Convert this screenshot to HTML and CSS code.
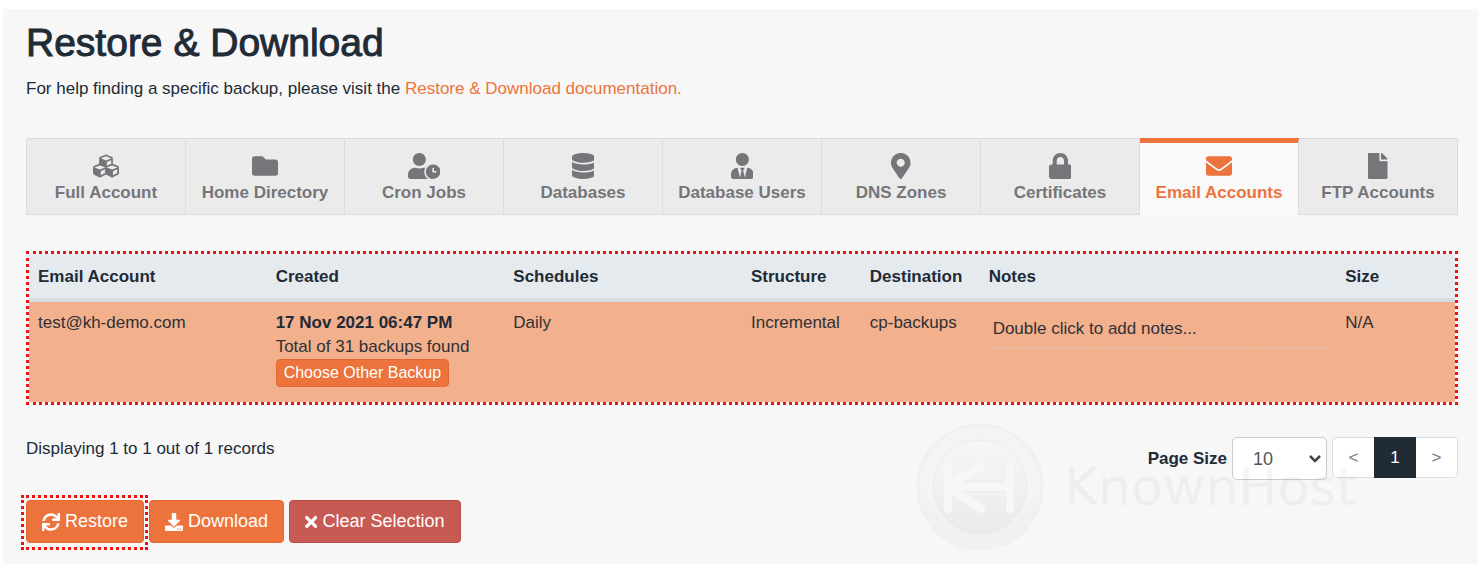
FILE: index.html
```html
<!DOCTYPE html>
<html lang="en">
<head>
  <meta charset="UTF-8">
  <meta name="viewport" content="width=device-width, initial-scale=1">
  <title>Restore &amp; Download</title>
  <link rel="stylesheet" href="styles.css">
</head>
<body>
  <main class="panel">
    <h1>Restore &amp; Download</h1>
    <p class="intro">For help finding a specific backup, please visit the <a href="#">Restore &amp; Download documentation.</a></p>

    <!-- Backup types -->
    <nav class="tabs">
      <a class="tab" href="#">
        <svg class="icon" viewBox="0 0 512 512"><path d="M488.6 250.2L392 214V105.5c0-15-9.3-28.4-23.4-33.7l-100-37.5c-8.1-3.1-17.1-3.1-25.3 0l-100 37.5c-14.1 5.3-23.4 18.7-23.4 33.7V214l-96.6 36.2C9.3 255.5 0 268.9 0 283.9V394c0 13.6 7.7 26.1 19.9 32.2l100 50c10.1 5.1 22.1 5.1 32.2 0l103.9-52 103.9 52c10.1 5.1 22.1 5.1 32.2 0l100-50c12.2-6.1 19.9-18.6 19.9-32.2V283.9c0-15-9.3-28.4-23.4-33.7zM358 214.8l-85 31.9v-68.2l85-37v73.3zM154 104.1l102-38.2 102 38.2v.6l-102 41.4-102-41.4v-.6zm84 291.1l-85 42.5v-79.1l85-38.8v75.4zm0-112l-102 41.4-102-41.4v-.6l102-38.2 102 38.2v.6zm240 112l-85 42.5v-79.1l85-38.8v75.4zm0-112l-102 41.4-102-41.4v-.6l102-38.2 102 38.2v.6z"/></svg>
        <span>Full Account</span>
      </a>
      <a class="tab" href="#">
        <svg class="icon" viewBox="0 0 512 512"><path d="M464 128H272l-64-64H48C21.49 64 0 85.49 0 112v288c0 26.51 21.49 48 48 48h416c26.51 0 48-21.49 48-48V176c0-26.51-21.49-48-48-48z"/></svg>
        <span>Home Directory</span>
      </a>
      <a class="tab" href="#">
        <svg class="icon" viewBox="0 0 640 512"><path d="M496 224c-79.6 0-144 64.4-144 144s64.4 144 144 144 144-64.4 144-144-64.4-144-144-144zm64 150.3c0 5.3-4.4 9.7-9.7 9.7h-60.6c-5.3 0-9.7-4.4-9.7-9.7v-76.6c0-5.3 4.4-9.7 9.7-9.7h12.6c5.3 0 9.7 4.4 9.7 9.7V352h38.3c5.3 0 9.7 4.4 9.7 9.7v12.6zM320 368c0-27.8 6.7-54.1 18.2-77.5-8-1.5-16.2-2.5-24.6-2.5h-16.7c-22.2 10.2-46.9 16-72.9 16s-50.6-5.8-72.9-16h-16.7C60.2 288 0 348.2 0 422.4V464c0 26.5 21.5 48 48 48h347.1c-45.3-31.9-75.1-84.5-75.1-144zm-96-112c70.7 0 128-57.3 128-128S294.7 0 224 0 96 57.3 96 128s57.3 128 128 128z"/></svg>
        <span>Cron Jobs</span>
      </a>
      <a class="tab" href="#">
        <svg class="icon" viewBox="0 0 448 512"><path d="M448 73.143v45.714C448 159.143 347.667 192 224 192S0 159.143 0 118.857V73.143C0 32.857 100.333 0 224 0s224 32.857 224 73.143zM448 176v102.857C448 319.143 347.667 352 224 352S0 319.143 0 278.857V176c48.125 33.143 136.208 48.572 224 48.572S399.874 209.143 448 176zm0 160v102.857C448 479.143 347.667 512 224 512S0 479.143 0 438.857V336c48.125 33.143 136.208 48.572 224 48.572S399.874 369.143 448 336z"/></svg>
        <span>Databases</span>
      </a>
      <a class="tab" href="#">
        <svg class="icon" viewBox="0 0 448 512"><path d="M224 256c70.7 0 128-57.3 128-128S294.7 0 224 0 96 57.3 96 128s57.3 128 128 128zm95.8 32.6L272 480l-32-136 32-56h-96l32 56-32 136-47.8-191.4C56.9 292 0 350.3 0 422.4V464c0 26.5 21.5 48 48 48h352c26.5 0 48-21.5 48-48v-41.6c0-72.1-56.9-130.4-128.2-133.8z"/></svg>
        <span>Database Users</span>
      </a>
      <a class="tab" href="#">
        <svg class="icon" viewBox="0 0 384 512"><path d="M172.268 501.67C26.97 291.031 0 269.413 0 192 0 85.961 85.961 0 192 0s192 85.961 192 192c0 77.413-26.97 99.031-172.268 309.67-9.535 13.774-29.93 13.773-39.464 0zM192 272c44.183 0 80-35.817 80-80s-35.817-80-80-80-80 35.817-80 80 35.817 80 80 80z"/></svg>
        <span>DNS Zones</span>
      </a>
      <a class="tab" href="#">
        <svg class="icon" viewBox="0 0 448 512"><path d="M400 224h-24v-72C376 68.2 307.8 0 224 0S72 68.2 72 152v72H48c-26.5 0-48 21.5-48 48v192c0 26.5 21.5 48 48 48h352c26.5 0 48-21.5 48-48V272c0-26.5-21.5-48-48-48zm-104 0H152v-72c0-39.7 32.3-72 72-72s72 32.3 72 72v72z"/></svg>
        <span>Certificates</span>
      </a>
      <a class="tab active" href="#">
        <svg class="icon" viewBox="0 0 512 512"><path d="M502.3 190.8c3.9-3.1 9.7-.2 9.7 4.7V400c0 26.5-21.5 48-48 48H48c-26.5 0-48-21.5-48-48V195.6c0-5 5.7-7.8 9.7-4.7 22.4 17.4 52.1 39.5 154.1 113.6 21.1 15.4 56.7 47.8 92.2 47.6 35.7.3 72-32.8 92.3-47.6 102-74.1 131.6-96.3 154-113.7zM256 320c23.2.4 56.6-29.2 73.4-41.4 132.7-96.3 142.8-104.7 173.4-128.7 5.8-4.5 9.2-11.5 9.2-18.9v-19c0-26.5-21.5-48-48-48H48c-26.5 0-48 21.5-48 48v19c0 7.4 3.4 14.3 9.2 18.9 30.6 23.9 40.7 32.4 173.4 128.7 16.8 12.2 50.2 41.8 73.4 41.4z"/></svg>
        <span>Email Accounts</span>
      </a>
      <a class="tab" href="#">
        <svg class="icon" viewBox="0 0 384 512"><path d="M224 136V0H24C10.7 0 0 10.7 0 24v464c0 13.3 10.7 24 24 24h336c13.3 0 24-10.7 24-24V160H248c-13.2 0-24-10.8-24-24zm160-14.1v6.1H256V0h6.1c6.4 0 12.5 2.5 17 7l97.9 98c4.5 4.5 7 10.6 7 16.9z"/></svg>
        <span>FTP Accounts</span>
      </a>
    </nav>

    <!-- Backups -->
    <div class="backups">
      <table>
        <thead>
          <tr>
            <th class="col-2">Email Account</th>
            <th class="col-2">Created</th>
            <th class="col-2">Schedules</th>
            <th class="col-1">Structure</th>
            <th class="col-1">Destination</th>
            <th class="col-3">Notes</th>
            <th class="col-1">Size</th>
          </tr>
        </thead>
        <tbody>
          <tr>
            <td>test@kh-demo.com</td>
            <td>
              <strong>17 Nov 2021 06:47 PM</strong>
              <div>Total of 31 backups found</div>
              <button type="button" class="btn btn-small">Choose Other Backup</button>
            </td>
            <td>Daily</td>
            <td>Incremental</td>
            <td>cp-backups</td>
            <td><div class="note">Double click to add notes...</div></td>
            <td>N/A</td>
          </tr>
        </tbody>
      </table>
    </div>

    <div class="table-footer">
      <div class="records">Displaying 1 to 1 out of 1 records</div>
      <div class="paging">
        <label for="pageSize">Page Size</label>
        <select id="pageSize">
          <option>10</option>
          <option>25</option>
          <option>50</option>
        </select>
        <div class="pager">
          <button type="button">&lt;</button>
          <button type="button" class="current">1</button>
          <button type="button">&gt;</button>
        </div>
      </div>
    </div>

    <div class="actions">
      <button type="button" class="btn highlighted">
        <svg class="icon" viewBox="0 0 512 512"><path d="M440.65 12.57l4 82.77A247.16 247.16 0 0 0 255.83 8C134.73 8 33.91 94.92 12.29 209.82A12 12 0 0 0 24.09 224h49.05a12 12 0 0 0 11.67-9.26 175.91 175.91 0 0 1 317-56.94l-101.46-4.86a12 12 0 0 0-12.57 12v47.41a12 12 0 0 0 12 12H500a12 12 0 0 0 12-12V12a12 12 0 0 0-12-12h-47.37a12 12 0 0 0-11.98 12.57zM255.83 432a175.61 175.61 0 0 1-146-77.8l101.8 4.87a12 12 0 0 0 12.57-12v-47.4a12 12 0 0 0-12-12H12a12 12 0 0 0-12 12V500a12 12 0 0 0 12 12h47.35a12 12 0 0 0 12-12.6l-4.15-82.57A247.17 247.17 0 0 0 255.83 504c121.11 0 221.93-86.92 243.55-201.82a12 12 0 0 0-11.8-14.18h-49.05a12 12 0 0 0-11.67 9.26A175.86 175.86 0 0 1 255.83 432z"/></svg>
        Restore
      </button>
      <button type="button" class="btn">
        <svg class="icon" viewBox="0 0 512 512"><path d="M216 0h80c13.3 0 24 10.7 24 24v168h87.7c17.8 0 26.7 21.5 14.1 34.1L269.7 378.3c-7.5 7.5-19.8 7.5-27.3 0L90.1 226.1c-12.6-12.6-3.7-34.1 14.1-34.1H192V24c0-13.3 10.7-24 24-24zm296 376v112c0 13.3-10.7 24-24 24H24c-13.3 0-24-10.7-24-24V376c0-13.3 10.7-24 24-24h146.7l49 49c20.1 20.1 52.5 20.1 72.6 0l49-49H488c13.3 0 24 10.7 24 24zm-124 88c0-11-9-20-20-20s-20 9-20 20 9 20 20 20 20-9 20-20zm64 0c0-11-9-20-20-20s-20 9-20 20 9 20 20 20 20-9 20-20z"/></svg>
        Download
      </button>
      <button type="button" class="btn btn-danger">
        <svg class="icon" viewBox="0 0 352 512"><path d="M242.72 256l100.07-100.07c12.28-12.28 12.28-32.19 0-44.48l-22.24-22.24c-12.28-12.28-32.19-12.28-44.48 0L176 189.28 75.93 89.21c-12.28-12.28-32.19-12.28-44.48 0L9.21 111.45c-12.28 12.28-12.28 32.19 0 44.48L109.28 256 9.21 356.07c-12.28 12.28-12.28 32.19 0 44.48l22.24 22.24c12.28 12.28 32.2 12.28 44.48 0L176 322.72l100.07 100.07c12.28 12.28 32.2 12.28 44.48 0l22.24-22.24c12.28-12.28 12.28-32.19 0-44.48L242.72 256z"/></svg>
        Clear Selection
      </button>
    </div>

    <!-- Watermark -->
    <div class="watermark">
      <svg class="watermark-logo" viewBox="0 0 128 128">
        <defs>
          <linearGradient id="disc" x1="0" y1="0" x2="0" y2="1">
            <stop offset="0" stop-color="#f6f6f6"/>
            <stop offset="1" stop-color="#eaeaea"/>
          </linearGradient>
        </defs>
        <circle cx="64" cy="64" r="62" fill="#f4f4f4" stroke="#f0f0f0" stroke-width="3"/>
        <path d="M4 66Q10 80 16 80A50 50 0 0 0 46 108H82A50 50 0 0 0 112 80Q120 78 124 68A60 60 0 0 1 4 66z" fill="#f1f1f1"/>
        <circle cx="64" cy="64" r="47" fill="url(#disc)" stroke="#ebebeb"/>
        <path d="M32 43V86M65 43L37 60Q32 64 37 68L66 86M40 64H91M94 43V86" fill="none" stroke="#f7f7f7" stroke-width="8" stroke-linecap="round"/>
        <path d="M52 71H86V86" fill="none" stroke="#f5f5f5" stroke-width="1"/>
      </svg>
      <span>KnownHost</span>
    </div>
  </main>
</body>
</html>
```
FILE: styles.css
```css
body {
  margin: 0;
  padding: 9px 3px 10px;
  background: #fff;
  color: #212b36;
  font-family: "Liberation Sans", Arial, sans-serif;
  font-size: 17px;
  line-height: 24px;
}

.panel {
  position: relative;
  padding: 10px 20px 21px 23px;
  background: #f7f7f7;
}

h1 {
  margin: 0 0 10px;
  font-size: 39px;
  font-weight: 500;
  line-height: 48px;
  -webkit-text-stroke: 1px #212b36;
}

.intro {
  margin: 0 0 37px;
}

a {
  color: #ec743c;
  text-decoration: none;
}

.icon {
  height: 1em;
  fill: currentColor;
}

/* tabs */
.tabs {
  display: flex;
  border-left: 1px solid #dcdcdc;
}

.tab {
  flex: 1 1 0;
  display: flex;
  flex-direction: column;
  align-items: center;
  padding: 14px 0 7px;
  background: #ebebeb;
  border: 1px solid #dcdcdc;
  border-left: none;
  color: #75767a;
  font-weight: bold;
  line-height: 28px;
  white-space: nowrap;
}

.tab .icon {
  height: 26px;
}

.tab.active {
  padding-top: 10px;
  background: #f9f9f9;
  border-top: 5px solid #ec743c;
  border-bottom-color: #f9f9f9;
  color: #ec743c;
}

/* backups table */
.backups {
  margin-top: 36px;
  border: 3px dotted #f01010;
}

table {
  width: 100%;
  table-layout: fixed;
  border-collapse: collapse;
  background: #f2b08d;
}

th, td {
  box-sizing: border-box;
  padding: 9px;
  text-align: left;
  vertical-align: top;
}

th {
  padding-top: 11px;
  background: #e5eaef;
  border-bottom: 4px solid #d8dbe2;
}

td {
  padding-bottom: 15px;
  color: #2f3136;
}

td strong {
  color: #212b36;
}

.col-1 {
  width: 8.3333%;
}

.col-2 {
  width: 16.6667%;
}

.col-3 {
  width: 25%;
}

.note {
  padding: 6px 4px;
  border-bottom: 1px dashed #d5cbc5;
}

/* buttons */
.btn {
  display: flex;
  align-items: center;
  gap: 5px;
  height: 43px;
  padding: 0 15px;
  border: 1px solid #e2692f;
  border-radius: 4px;
  background: #ec743c;
  color: #fff;
  font-family: inherit;
  font-size: 18px;
  cursor: pointer;
}

.btn-small {
  height: 28px;
  padding: 0 7px;
  font-size: 16px;
}

.btn-danger {
  background: #c85a54;
  border-color: #bd4a44;
}

.highlighted {
  position: relative;
}

.highlighted::after {
  content: "";
  position: absolute;
  inset: -6px -5px -8px -6px;
  border: 3px dotted #f01010;
}

.actions {
  display: flex;
  gap: 5px;
  margin-top: 19px;
}

/* footer */
.table-footer {
  display: flex;
  justify-content: space-between;
  margin-top: 32px;
}

.paging {
  display: flex;
  gap: 5px;
}

.paging label {
  font-weight: bold;
  line-height: 44px;
}

select {
  width: 95px;
  height: 43px;
  padding: 0 20px;
  border: 1px solid #c9cbce;
  border-radius: 5px;
  background: #fff url("data:image/svg+xml,%3Csvg xmlns='http://www.w3.org/2000/svg' viewBox='0 0 12 8'%3E%3Cpath d='M1 1l5 5 5-5' fill='none' stroke='%23444' stroke-width='2.5'/%3E%3C/svg%3E") no-repeat right 5px center / 12px 8px;
  color: #555;
  font-family: inherit;
  font-size: 18px;
  appearance: none;
}

.pager {
  display: flex;
  height: 41px;
}

.pager button {
  width: 42px;
  padding: 0;
  border: 1px solid #dcdddf;
  background: #fff;
  color: #75767a;
  font-family: inherit;
  font-size: 17px;
}

.pager button:first-child {
  border-right: none;
  border-radius: 5px 0 0 5px;
}

.pager button:last-child {
  border-left: none;
  border-radius: 0 5px 5px 0;
}

.pager .current {
  background: #212b36;
  border-color: #212b36;
  color: #fff;
}

/* watermark lies over the page size controls */
.watermark {
  position: absolute;
  right: 72px;
  bottom: 13px;
  display: flex;
  align-items: center;
  gap: 20px;
  width: 490px;
  color: #000;
  font-family: "DejaVu Sans", sans-serif;
  font-size: 52px;
  line-height: 36px;
  pointer-events: none;
}

.watermark-logo {
  width: 128px;
}

.watermark span {
  opacity: 0.03;
}
```
